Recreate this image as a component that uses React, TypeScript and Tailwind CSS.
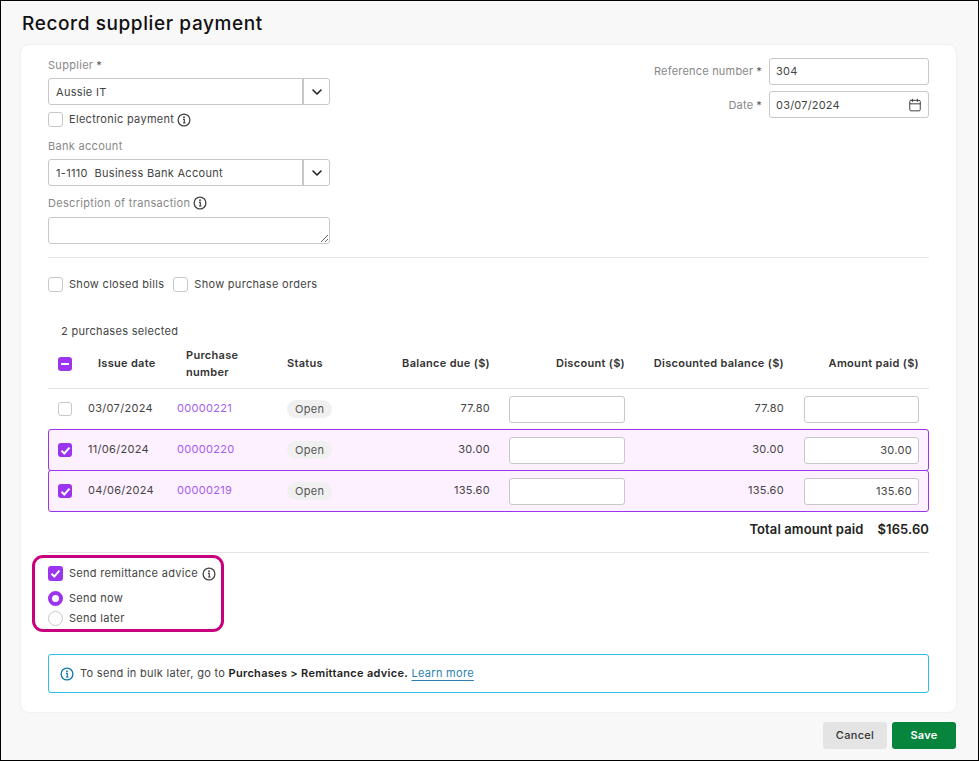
import { ChevronDown, Calendar } from "lucide-react";

const Info = ({ color = "#444", size = 14 }: { color?: string; size?: number }) => (
  <svg width={size} height={size} viewBox="0 0 14 14" fill="none" className="shrink-0">
    <circle cx="7" cy="7" r="5.9" stroke={color} strokeWidth="1.3" />
    <circle cx="7" cy="4.3" r="0.95" fill={color} />
    <path d="M6 6.4H7.3V10M6 10H8.6" stroke={color} strokeWidth="1.2" />
  </svg>
);

const Box = ({ state = "off", small }: { state?: "off" | "on" | "mixed"; small?: boolean }) =>
  state === "off" ? (
    <span
      className={`block ${small ? "w-[14px] h-[14px]" : "w-[15px] h-[15px]"} rounded-[3px] border border-[#c8c8c8] bg-white shrink-0`}
    />
  ) : (
    <span
      className={`flex items-center justify-center ${small ? "w-[14px] h-[14px]" : "w-[15px] h-[15px]"} rounded-[3px] bg-[#9b34ef] shrink-0`}
    >
      {state === "on" ? (
        <svg width="11" height="11" viewBox="0 0 11 11" fill="none">
          <path d="M1.5 5.8L4.3 8.5L9.5 2.6" stroke="white" strokeWidth="2" />
        </svg>
      ) : (
        <span className="block w-[8px] h-[2px] bg-white" />
      )}
    </span>
  );

const Select = ({ value }: { value: string }) => (
  <div className="flex w-[282px] h-[27px] rounded-[3px] border border-[#c8c8c8] bg-white">
    <div className="flex-1 flex items-center pl-[7px] pt-px text-[#444] whitespace-pre">{value}</div>
    <div className="w-[27px] flex items-center justify-center border-l-2 border-[#c8c8c8]">
      <ChevronDown size={16} strokeWidth={2.4} color="#222" />
    </div>
  </div>
);

const Label = ({ children, req }: { children: string; req?: boolean }) => (
  <div className="h-[16px] flex items-center pt-[1px] text-[#888] whitespace-nowrap">
    {children}
    {req && <span className="ml-[3px] text-[#555]">*</span>}
  </div>
);

const Cell = ({ value, narrow }: { value?: string; narrow?: boolean }) => (
  <div
    className={`${narrow ? "w-[115px]" : "w-[116px]"} h-[27px] rounded-[3px] border border-[#c8c8c8] bg-white flex items-center justify-end pr-[6px] pt-px text-[#444]`}
  >
    {value}
  </div>
);

const rows = [
  { sel: false, date: "03/07/2024", num: "00000221", bal: "77.80", disc: "77.80", paid: "" },
  { sel: true, date: "11/06/2024", num: "00000220", bal: "30.00", disc: "30.00", paid: "30.00" },
  { sel: true, date: "04/06/2024", num: "00000219", bal: "135.60", disc: "135.60", paid: "135.60" },
];

const Radio = ({ on }: { on?: boolean }) =>
  on ? (
    <span className="block w-[15px] h-[15px] rounded-full border-[4px] border-[#9b34ef] bg-white shrink-0" />
  ) : (
    <span className="block w-[15px] h-[15px] rounded-full border border-[#c8c8c8] bg-white shrink-0" />
  );

export default function App() {
  return (
    <div className="h-screen w-full border border-black bg-[#f8f8f8] pl-5 pr-[22px] text-[11px] tracking-[0.3px] font-['Inter',sans-serif] overflow-hidden">
      <h1 className="h-[44px] flex items-center text-[19px] leading-none font-medium tracking-[0.6px] text-[#111] pl-px">
        Record supplier payment
      </h1>
      <div className="bg-white rounded-lg shadow-[0_0_3px_rgba(0,0,0,0.08)] px-[27px] pt-[12px] pb-[19px]">
        <div className="flex justify-between">
          <div className="w-[282px]">
            <Label req>Supplier</Label>
            <div className="mt-[5px]">
              <Select value="Aussie IT" />
            </div>
            <div className="mt-[7px] flex items-center h-[15px]">
              <Box />
              <span className="ml-[6px] mr-[3px] text-[#444]">Electronic payment</span>
              <Info />
            </div>
            <div className="mt-[11px]">
              <Label>Bank account</Label>
            </div>
            <div className="mt-[5px]">
              <Select value="1-1110  Business Bank Account" />
            </div>
            <div className="mt-[9px] h-[16px] flex items-center gap-[3px] text-[#888]">
              <span className="pt-px">Description of transaction</span> <Info />
            </div>
            <textarea
              readOnly
              className="mt-[6px] block w-[282px] h-[27px] rounded-[3px] border border-[#c8c8c8] bg-white"
            />
          </div>
          <div className="w-[300px] mt-px tracking-[0.2px]">
            <div className="flex items-center justify-end gap-[7px]">
              <div className="-mt-[2px]">
                <Label req>Reference number</Label>
              </div>
              <div className="w-[160px] shrink-0 h-[27px] rounded-[3px] border border-[#c8c8c8] flex items-center pl-[6px] text-[#444]">
                304
              </div>
            </div>
            <div className="mt-[6px] flex items-center justify-end gap-[7px]">
              <Label req>Date</Label>
              <div className="w-[160px] shrink-0 h-[27px] rounded-[3px] border border-[#c8c8c8] flex items-center justify-between pl-[6px] pr-[6px] text-[#444]">
                <span className="pt-px">03/07/2024</span>
                <Calendar size={14} strokeWidth={1.6} color="#333" />
              </div>
            </div>
          </div>
        </div>

        <div className="mt-[13px] h-px bg-[#e4e4e4]" />

        <div className="mt-[19px] h-[15px] flex items-center text-[#444]">
          <Box />
          <span className="ml-[6px]">Show closed bills</span>
          <span className="ml-[9px]">
            <Box />
          </span>
          <span className="ml-[6px]">Show purchase orders</span>
        </div>

        <div className="mt-[31px] h-[16px] flex items-center pl-[13px] text-[#444]">2 purchases selected</div>

        <div className="h-[50px] grid grid-cols-[40px_89px_110px_60px_143px_135px_159px_135px] pr-[10px] items-center border-b border-[#e4e4e4] font-semibold text-[#333]">
          <div className="pl-[10px]">
            <Box state="mixed" small />
          </div>
          <div className="pl-[10px]">Issue date</div>
          <div className="pl-[9px] leading-[17px]">
            Purchase
            <br />
            number
          </div>
          <div>Status</div>
          <div className="text-right">Balance due ($)</div>
          <div className="text-right">Discount ($)</div>
          <div className="text-right">Discounted balance ($)</div>
          <div className="text-right">Amount paid ($)</div>
        </div>

        {rows.map((r) => (
          <div
            key={r.num}
            className={`h-[42px] -mt-px grid grid-cols-[39px_89px_110px_60px_143px_135px_159px_135px] pr-[9px] items-center rounded-[3px] border ${
              r.sel ? "border-[#9b34ef] bg-[#fdf0ff]" : "border-transparent"
            } text-[#444] relative`}
          >
            <div className="pl-[9px]">
              <Box state={r.sel ? "on" : "off"} small />
            </div>
            <div className="pb-[2px]">{r.date}</div>
            <div className="pb-[2px] text-[#a45df0]">{r.num}</div>
            <div>
              <span className="inline-flex items-center h-[18px] px-[8px] rounded-full bg-[#f0f0f0] text-[#555]">Open</span>
            </div>
            <div className="pb-[2px] text-right">{r.bal}</div>
            <div className="flex justify-end">
              <Cell />
            </div>
            <div className="pb-[2px] text-right">{r.disc}</div>
            <div className="flex justify-end">
              <Cell value={r.paid} narrow />
            </div>
          </div>
        ))}

        <div className="mt-[9px] h-[16px] pt-[2px] flex items-center justify-end gap-[14px] font-semibold text-[#222] text-[13px] tracking-[0.1px]">
          <span>Total amount paid</span>
          <span>$165.60</span>
        </div>

        <div className="mt-[15px] h-px bg-[#e4e4e4]" />

        <div className="relative pt-[13px]">
          <div className="absolute left-[-16px] top-[2px] w-[192px] h-[77px] rounded-[11px] border-[3px] border-[#c7007e]" />
          <div className="h-[15px] flex items-center text-[#444]">
            <Box state="on" />
            <span className="ml-[6px] mr-[4px]">Send remittance advice</span>
            <Info />
          </div>
          <div className="mt-[10px] h-[15px] flex items-center text-[#444]">
            <Radio on />
            <span className="ml-[6px]">Send now</span>
          </div>
          <div className="mt-[5px] h-[15px] flex items-center text-[#444]">
            <Radio />
            <span className="ml-[6px]">Send later</span>
          </div>
        </div>

        <div className="mt-[28px] h-[39px] rounded-[3px] border border-[#2cbdea] flex items-center pl-[11px] text-[#444]">
          <Info color="#0f76b0" />
          <span className="ml-[6px]">
            To send in bulk later, go to <b className="font-semibold text-[#222]">Purchases &gt; Remittance advice.</b>{" "}
            <a className="text-[#2a7fb0] underline underline-offset-[3px]">Learn more</a>
          </span>
        </div>
      </div>

      <div className="mt-[10px] flex justify-end gap-[5px]">
        <button className="w-[64px] h-[27px] rounded-[3px] bg-[#e4e4e4] text-[#333] font-medium">Cancel</button>
        <button className="w-[64px] h-[27px] rounded-[3px] bg-[#07853d] text-white font-semibold">Save</button>
      </div>
    </div>
  );
}
